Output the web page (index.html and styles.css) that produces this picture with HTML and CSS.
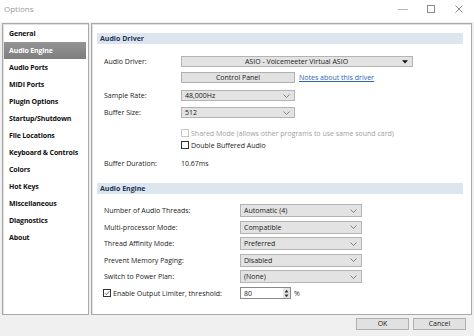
FILE: index.html
```html
<!DOCTYPE html>
<html>
<head>
<meta charset="utf-8">
<link rel="stylesheet" href="styles.css">
</head>
<body>
<div class="window">
  <div class="titlebar">
    <span class="title">Options</span>
    <div class="wincontrols">
      <svg class="wc" width="10" height="10" viewBox="0 0 10 10"><path d="M0 5.5H10" stroke="#b5b5b5" stroke-width="1"/></svg>
      <svg class="wc" width="10" height="10" viewBox="0 0 10 10"><rect x="1.5" y="1.5" width="7" height="7" fill="none" stroke="#8a8a8a" stroke-width="1"/></svg>
      <svg class="wc" width="10" height="10" viewBox="0 0 10 10"><path d="M1.5 1.5L8.5 8.5M8.5 1.5L1.5 8.5" stroke="#8a8a8a" stroke-width="1"/></svg>
    </div>
  </div>
  <div class="main">
    <ul class="nav">
      <li>General</li>
      <li class="sel">Audio Engine</li>
      <li>Audio Ports</li>
      <li>MIDI Ports</li>
      <li>Plugin Options</li>
      <li>Startup/Shutdown</li>
      <li>File Locations</li>
      <li>Keyboard &amp; Controls</li>
      <li>Colors</li>
      <li>Hot Keys</li>
      <li>Miscellaneous</li>
      <li>Diagnostics</li>
      <li>About</li>
    </ul>
    <div class="content">
      <div class="section-head">Audio Driver</div>
      <div class="driver">
        <div class="row r-driver">
          <span class="label">Audio Driver:</span>
          <div class="combo solid wide"><span class="ctext center">ASIO - Voicemeeter Virtual ASIO</span><svg class="tri" width="6" height="4" viewBox="0 0 6 4"><path d="M0 0.3H6L3 3.6Z" fill="#111"/></svg></div>
        </div>
        <div class="row r-cp">
          <span class="label"></span>
          <div class="cp-wrap"><div class="button cp">Control Panel</div><a class="link">Notes about this driver</a></div>
        </div>
        <div class="row r-sr">
          <span class="label">Sample Rate:</span>
          <div class="combo mid"><span class="ctext">48,000Hz</span><svg class="chev" width="7" height="4" viewBox="0 0 7 4"><path d="M0.5 0.5L3.5 3.5L6.5 0.5" fill="none" stroke="#777" stroke-width="0.9"/></svg></div>
        </div>
        <div class="row r-bs">
          <span class="label">Buffer Size:</span>
          <div class="combo mid"><span class="ctext">512</span><svg class="chev" width="7" height="4" viewBox="0 0 7 4"><path d="M0.5 0.5L3.5 3.5L6.5 0.5" fill="none" stroke="#777" stroke-width="0.9"/></svg></div>
        </div>
        <div class="row r-shared">
          <span class="label"></span>
          <label class="check disabled"><span class="box"></span>Shared Mode (allows other programs to use same sound card)</label>
        </div>
        <div class="row r-double">
          <span class="label"></span>
          <label class="check"><span class="box"></span>Double Buffered Audio</label>
        </div>
        <div class="row r-dur">
          <span class="label">Buffer Duration:</span>
          <span class="value">10.67ms</span>
        </div>
      </div>
      <div class="section-head eng">Audio Engine</div>
      <div class="engine">
        <div class="erow">
          <span class="label">Number of Audio Threads:</span>
          <div class="combo eng-combo"><span class="ctext">Automatic (4)</span><svg class="chev" width="7" height="4" viewBox="0 0 7 4"><path d="M0.5 0.5L3.5 3.5L6.5 0.5" fill="none" stroke="#777" stroke-width="0.9"/></svg></div>
        </div>
        <div class="erow">
          <span class="label">Multi-processor Mode:</span>
          <div class="combo eng-combo"><span class="ctext">Compatible</span><svg class="chev" width="7" height="4" viewBox="0 0 7 4"><path d="M0.5 0.5L3.5 3.5L6.5 0.5" fill="none" stroke="#777" stroke-width="0.9"/></svg></div>
        </div>
        <div class="erow">
          <span class="label">Thread Affinity Mode:</span>
          <div class="combo eng-combo"><span class="ctext">Preferred</span><svg class="chev" width="7" height="4" viewBox="0 0 7 4"><path d="M0.5 0.5L3.5 3.5L6.5 0.5" fill="none" stroke="#777" stroke-width="0.9"/></svg></div>
        </div>
        <div class="erow">
          <span class="label">Prevent Memory Paging:</span>
          <div class="combo eng-combo"><span class="ctext">Disabled</span><svg class="chev" width="7" height="4" viewBox="0 0 7 4"><path d="M0.5 0.5L3.5 3.5L6.5 0.5" fill="none" stroke="#777" stroke-width="0.9"/></svg></div>
        </div>
        <div class="erow">
          <span class="label">Switch to Power Plan:</span>
          <div class="combo eng-combo"><span class="ctext">(None)</span><svg class="chev" width="7" height="4" viewBox="0 0 7 4"><path d="M0.5 0.5L3.5 3.5L6.5 0.5" fill="none" stroke="#777" stroke-width="0.9"/></svg></div>
        </div>
        <div class="erow last">
          <label class="check limiter"><span class="box checked"><svg width="8" height="8" viewBox="0 0 8 8"><path d="M1.2 4.2L3.2 6.2L7 1.8" fill="none" stroke="#222" stroke-width="0.9"/></svg></span>Enable Output Limiter, threshold:</label>
          <div class="spin-wrap">
            <div class="spin"><span class="ctext">80</span>
              <div class="spinbtns">
                <svg width="5" height="4" viewBox="0 0 5 4"><path d="M0.5 3.5H4.5L2.5 0.8Z" fill="#333"/></svg>
                <svg width="5" height="4" viewBox="0 0 5 4"><path d="M0.5 0.5H4.5L2.5 3.2Z" fill="#333"/></svg>
              </div>
            </div>
            <span class="pct">%</span>
          </div>
        </div>
      </div>
    </div>
  </div>
  <div class="footer">
    <div class="button dlg">OK</div>
    <div class="button dlg">Cancel</div>
  </div>
</div>
</body>
</html>
```
FILE: styles.css
```css
* { box-sizing: border-box; }
html, body {
  margin: 0;
  padding: 0;
}
body {
  width: 474px;
  height: 336px;
  overflow: hidden;
  background: #f0f0f0;
  font-family: "Open Sans", "Noto Sans", sans-serif;
  font-size: 7px;
  color: #1a1a1a;
}
.window {
  width: 474px;
  height: 336px;
  display: flex;
  flex-direction: column;
}
.titlebar {
  height: 22px;
  background: #ffffff;
  display: flex;
  align-items: flex-start;
  justify-content: space-between;
  padding: 3px 6px 0 4px;
}
.title {
  font-size: 8px;
  color: #9a9a9a;
  line-height: 12px;
}
.wincontrols {
  display: flex;
  gap: 18px;
  padding-top: 1px;
  margin-right: 4px;
}
.main {
  display: flex;
  gap: 2px;
  height: 292px;
  padding: 0 2px 0 2px;
  margin-top: 1px;
}
.nav {
  list-style: none;
  margin: 0;
  padding: 1px 0 0 0;
  width: 87px;
  background: #fff;
  border: 1px solid #a9a9a9;
  box-shadow: inset 1px 1px 0 #e0e0e0;
}
.nav li {
  height: 17px;
  line-height: 17px;
  padding-left: 5px;
  font-weight: 700;
  font-size: 7px;
  letter-spacing: -0.15px;
  color: #111;
  margin: 0 2px 0 1px;
  white-space: nowrap;
}
.nav li.sel {
  background: linear-gradient(#949494, #7e7e7e);
  color: #fff;
}
.content {
  flex: 1;
  background: #fff;
  border: 1px solid #a9a9a9;
  box-shadow: inset 1px 1px 0 #e0e0e0;
  padding: 9px 8px 0 5px;
}
.section-head {
  height: 11px;
  line-height: 11px;
  background: #dde6ee;
  color: #1c3557;
  font-weight: 700;
  font-size: 7px;
  padding-left: 3px;
}
.driver {
  padding-left: 7px;
  padding-top: 12px;
}
.row {
  display: grid;
  grid-template-columns: 77px 1fr;
  align-items: center;
}
.label {
  white-space: nowrap;
}
.r-driver { height: 11px; }
.r-cp { height: 11px; margin-top: 5px; }
.r-sr { height: 11px; margin-top: 7px; }
.r-bs { height: 11px; margin-top: 6px; }
.r-shared { height: 10px; margin-top: 10px; }
.r-double { height: 10px; margin-top: 2px; }
.r-dur { height: 10px; margin-top: 8px; }
.combo {
  height: 11px;
  background: #e3e3e3;
  border: 1px solid #b4b4b4;
  display: flex;
  align-items: center;
  padding: 0 4px 0 3px;
  position: relative;
}
.combo.wide { width: 232px; }
.combo.mid { width: 114px; }
.ctext {
  flex: 1;
  white-space: nowrap;
}
.ctext.center { text-align: center; padding-left: 6px; }
.tri { margin-right: 0; }
.cp-wrap {
  display: flex;
  align-items: center;
  gap: 4px;
}
.button {
  background: #e1e1e1;
  border: 1px solid #b0b0b0;
  text-align: center;
}
.button.cp {
  width: 114px;
  height: 11px;
  line-height: 9px;
}
.link {
  color: #2a63b8;
  text-decoration: underline;
  white-space: nowrap;
}
.check {
  display: flex;
  align-items: center;
  gap: 2px;
  white-space: nowrap;
}
.check .box {
  width: 8px;
  height: 8px;
  border: 1px solid #333;
  background: #fff;
  display: flex;
  align-items: center;
  justify-content: center;
}
.check.disabled { color: #a0a0a0; }
.check.disabled .box { border-color: #c8c8c8; }
.box svg { display: block; }
.value { white-space: nowrap; }
.section-head.eng { margin-top: 15px; }
.engine {
  padding-left: 7px;
  padding-top: 10px;
}
.erow {
  display: grid;
  grid-template-columns: 136px 1fr;
  align-items: center;
  height: 13px;
  margin-bottom: 3.5px;
}
.eng-combo {
  width: 122px;
  height: 13px;
}
.erow.last { margin-top: 1px; }
.limiter { margin-left: -1px; }
.spin-wrap {
  display: flex;
  align-items: center;
  gap: 3px;
}
.spin {
  width: 51px;
  height: 12px;
  border: 1px solid #8a8a8a;
  background: #fff;
  display: flex;
  align-items: center;
  padding-left: 3px;
}
.spinbtns {
  width: 7px;
  height: 10px;
  background: #e6e6e6;
  display: flex;
  flex-direction: column;
  align-items: center;
  justify-content: space-around;
  margin-right: 0;
}
.spinbtns svg { display: block; }
.pct { color: #333; }
.footer {
  display: flex;
  justify-content: flex-end;
  gap: 4px;
  padding: 3px 8px 0 0;
}
.button.dlg {
  width: 53px;
  height: 12px;
  line-height: 10px;
  font-size: 7px;
}
```
